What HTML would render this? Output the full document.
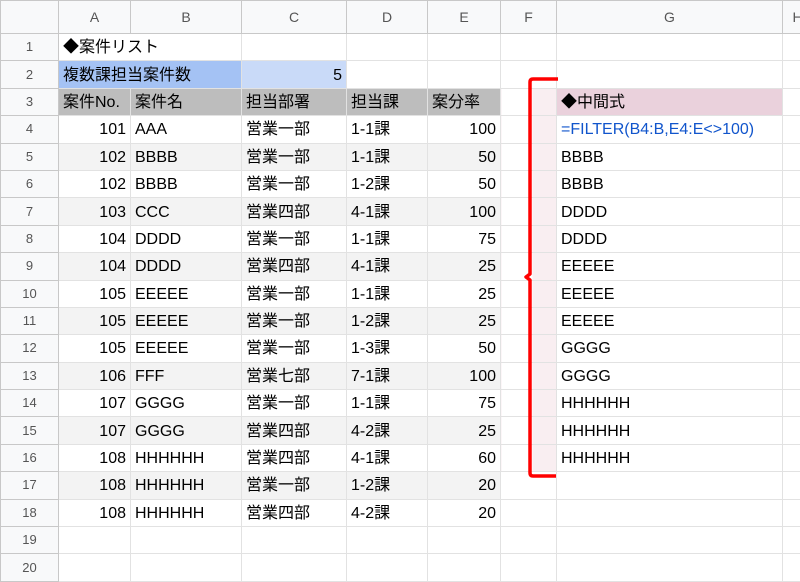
<!DOCTYPE html>
<html><head><meta charset="utf-8"><style>
body{margin:0;width:800px;height:565px;overflow:hidden;background:#fff;font-family:"Liberation Sans","Noto Sans CJK JP",sans-serif;position:relative}
table{border-collapse:collapse;table-layout:fixed;position:absolute;left:0;top:0;width:812px}
td{border:1px solid #e2e2e2;height:27.4px;padding:2px 4px 0;font-size:16px;line-height:18px;color:#000;white-space:nowrap;overflow:hidden;box-sizing:border-box}
tr.h td{height:33px;background:#f8f9fa;color:#555;font-size:14px;text-align:center;border-color:#c8c8c8;padding:0}
td.rh{background:#f8f9fa;color:#555;font-size:13px;text-align:center;border-color:#c8c8c8;padding:0}
.r{text-align:right}
.s td.d{background:#f3f3f3}
.g{background:#bdbdbd!important}
.b1{background:#a4c2f4}.b2{background:#c9daf8}
.pk{background:#ead1dc}
.bl{color:#1155cc}
.fp{background:linear-gradient(to right,#fff 0,#fff 31px,#f9eef1 31px)}
</style></head><body>
<table>
<colgroup><col style="width:58px"><col style="width:72px"><col style="width:111px"><col style="width:105px"><col style="width:81px"><col style="width:73px"><col style="width:56px"><col style="width:226px"><col style="width:30px"></colgroup>
<tr class="h"><td></td><td>A</td><td>B</td><td>C</td><td>D</td><td>E</td><td>F</td><td>G</td><td>H</td></tr>
<tr><td class="rh">1</td><td colspan="2">◆案件リスト</td><td></td><td></td><td></td><td></td><td></td><td></td></tr>
<tr><td class="rh">2</td><td colspan="2" class="b1">複数課担当案件数</td><td class="b2 r">5</td><td></td><td></td><td></td><td></td><td></td></tr>
<tr><td class="rh">3</td><td class="g">案件No.</td><td class="g">案件名</td><td class="g">担当部署</td><td class="g">担当課</td><td class="g">案分率</td><td class="fp"></td><td class="pk">◆中間式</td><td></td></tr>
<tr><td class="rh">4</td><td class="d r">101</td><td class="d">AAA</td><td class="d">営業一部</td><td class="d">1-1課</td><td class="d r">100</td><td class="fp"></td><td class="bl">=FILTER(B4:B,E4:E&lt;&gt;100)</td><td></td></tr>
<tr class="s"><td class="rh">5</td><td class="d r">102</td><td class="d">BBBB</td><td class="d">営業一部</td><td class="d">1-1課</td><td class="d r">50</td><td class="fp"></td><td>BBBB</td><td></td></tr>
<tr><td class="rh">6</td><td class="d r">102</td><td class="d">BBBB</td><td class="d">営業一部</td><td class="d">1-2課</td><td class="d r">50</td><td class="fp"></td><td>BBBB</td><td></td></tr>
<tr class="s"><td class="rh">7</td><td class="d r">103</td><td class="d">CCC</td><td class="d">営業四部</td><td class="d">4-1課</td><td class="d r">100</td><td class="fp"></td><td>DDDD</td><td></td></tr>
<tr><td class="rh">8</td><td class="d r">104</td><td class="d">DDDD</td><td class="d">営業一部</td><td class="d">1-1課</td><td class="d r">75</td><td class="fp"></td><td>DDDD</td><td></td></tr>
<tr class="s"><td class="rh">9</td><td class="d r">104</td><td class="d">DDDD</td><td class="d">営業四部</td><td class="d">4-1課</td><td class="d r">25</td><td class="fp"></td><td>EEEEE</td><td></td></tr>
<tr><td class="rh">10</td><td class="d r">105</td><td class="d">EEEEE</td><td class="d">営業一部</td><td class="d">1-1課</td><td class="d r">25</td><td class="fp"></td><td>EEEEE</td><td></td></tr>
<tr class="s"><td class="rh">11</td><td class="d r">105</td><td class="d">EEEEE</td><td class="d">営業一部</td><td class="d">1-2課</td><td class="d r">25</td><td class="fp"></td><td>EEEEE</td><td></td></tr>
<tr><td class="rh">12</td><td class="d r">105</td><td class="d">EEEEE</td><td class="d">営業一部</td><td class="d">1-3課</td><td class="d r">50</td><td class="fp"></td><td>GGGG</td><td></td></tr>
<tr class="s"><td class="rh">13</td><td class="d r">106</td><td class="d">FFF</td><td class="d">営業七部</td><td class="d">7-1課</td><td class="d r">100</td><td class="fp"></td><td>GGGG</td><td></td></tr>
<tr><td class="rh">14</td><td class="d r">107</td><td class="d">GGGG</td><td class="d">営業一部</td><td class="d">1-1課</td><td class="d r">75</td><td class="fp"></td><td>HHHHHH</td><td></td></tr>
<tr class="s"><td class="rh">15</td><td class="d r">107</td><td class="d">GGGG</td><td class="d">営業四部</td><td class="d">4-2課</td><td class="d r">25</td><td class="fp"></td><td>HHHHHH</td><td></td></tr>
<tr><td class="rh">16</td><td class="d r">108</td><td class="d">HHHHHH</td><td class="d">営業四部</td><td class="d">4-1課</td><td class="d r">60</td><td class="fp"></td><td>HHHHHH</td><td></td></tr>
<tr class="s"><td class="rh">17</td><td class="d r">108</td><td class="d">HHHHHH</td><td class="d">営業一部</td><td class="d">1-2課</td><td class="d r">20</td><td></td><td></td><td></td></tr>
<tr><td class="rh">18</td><td class="d r">108</td><td class="d">HHHHHH</td><td class="d">営業四部</td><td class="d">4-2課</td><td class="d r">20</td><td></td><td></td><td></td></tr>
<tr><td class="rh">19</td><td></td><td></td><td></td><td></td><td></td><td></td><td></td><td></td></tr>
<tr><td class="rh">20</td><td></td><td></td><td></td><td></td><td></td><td></td><td></td><td></td></tr>
</table>
<svg style="position:absolute;left:0;top:0" width="800" height="565">
<path d="M558 79 H533 Q530 79 530 82 V274 L526 277 L530 280 V473 Q530 476 533 476 H556" fill="none" stroke="#f00" stroke-width="3.5" stroke-linejoin="round"/>
</svg>
</body></html>
